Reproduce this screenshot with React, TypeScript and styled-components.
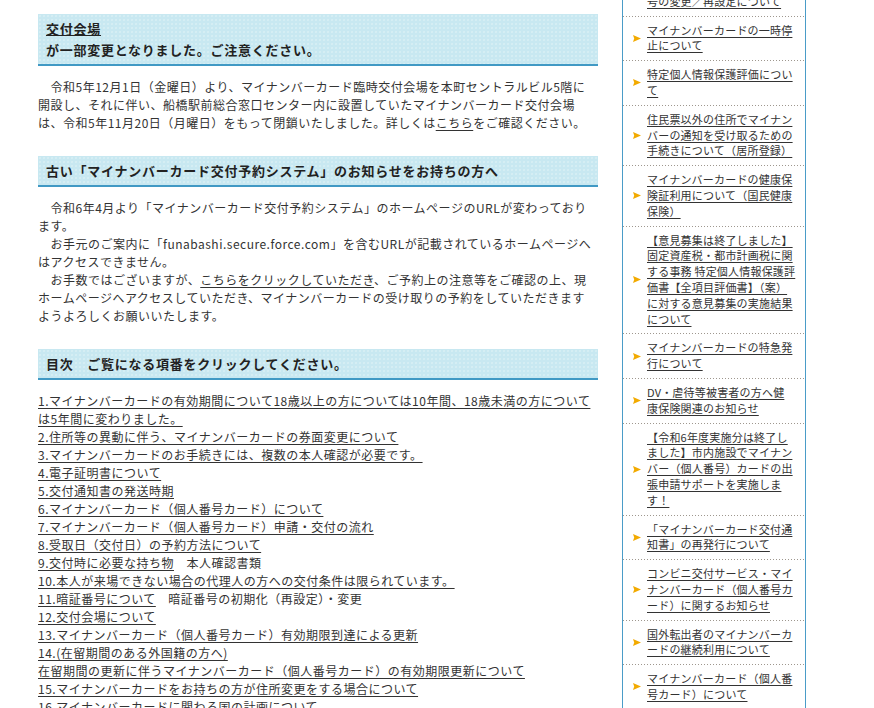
import React from "react";
import styled, { createGlobalStyle } from "styled-components";

const Global = createGlobalStyle`
  html, body { margin: 0; padding: 0; background: #fff; }
  body {
    font-family: "Noto Sans CJK JP", "Noto Sans", sans-serif;
    color: #333;
    overflow: hidden;
  }
`;

const Page = styled.div`
  display: flex;
  align-items: flex-start;
  gap: 24px;
  padding-left: 38px;
`;

const Main = styled.main`
  width: 560px;
  flex: none;
  padding-top: 14px;
`;

const Heading = styled.h2`
  margin: 0;
  padding: 4px 8px;
  font-size: 13px;
  line-height: 21px;
  font-weight: bold;
  letter-spacing: 0.75px;
  color: #222;
  background-color: #c8e8f1;
  background-image: radial-gradient(circle, rgba(255, 255, 255, 0.25) 0.7px, transparent 0.9px);
  background-size: 4px 4px;
  border-bottom: 2px solid #4199c4;
`;

const HeadLink = styled.a`
  color: #222;
  text-decoration: underline;
`;

const Para = styled.p`
  margin: 12px 0 24px;
  padding-right: 4px;
  font-size: 12px;
  line-height: 18px;
  letter-spacing: 0.5px;
`;

const Line = styled.span`
  display: block;
`;

const TextLink = styled.a`
  color: #333;
  text-decoration: underline;
  text-underline-offset: 2px;
`;

const Toc = styled.ul`
  margin: 12px 0 0;
  padding: 0 4px 0 0;
  list-style: none;
  font-size: 12px;
  line-height: 18px;
  letter-spacing: 0.5px;
`;

const TocItem = styled.li`
  margin: 0;
`;

const Side = styled.aside`
  width: 182px;
  flex: none;
  margin-top: -28px;
  border-left: 1px solid #4a9cc8;
  border-right: 1px solid #4a9cc8;
`;

const SideItem = styled.div`
  display: flex;
  align-items: center;
  padding: 6px 9.5px 7px 10px;
  background: linear-gradient(to right, #9e978e 1px, transparent 1px) left bottom / 3px 1px repeat-x;
`;

const Arrow = styled.svg`
  flex: none;
  width: 8px;
  height: 7px;
  margin-right: 6px;
`;

const SideLink = styled.a`
  display: block;
  width: 148.5px;
  font-size: 11px;
  line-height: 15.8px;
  letter-spacing: 0.2px;
  color: #333;
  text-decoration: underline;
  text-underline-offset: 2px;
`;

const IND = "\u3000";

const sideLinks = [
  "マイナンバーカードの暗証番号の変更／再設定について",
  "マイナンバーカードの一時停止について",
  "特定個人情報保護評価について",
  "住民票以外の住所でマイナンバーの通知を受け取るための手続きについて（居所登録）",
  "マイナンバーカードの健康保険証利用について（国民健康保険）",
  "【意見募集は終了しました】固定資産税・都市計画税に関する事務 特定個人情報保護評価書【全項目評価書】（案）に対する意見募集の実施結果について",
  "マイナンバーカードの特急発行について",
  "DV・虐待等被害者の方へ健康保険関連のお知らせ",
  "【令和6年度実施分は終了しました】市内施設でマイナンバー（個人番号）カードの出張申請サポートを実施します！",
  "「マイナンバーカード交付通知書」の再発行について",
  "コンビニ交付サービス・マイナンバーカード（個人番号カード）に関するお知らせ",
  "国外転出者のマイナンバーカードの継続利用について",
  "マイナンバーカード（個人番号カード）について",
  "マイナンバーカードの暗証番号について",
];

type TocEntry = { link: string; extra?: string; second?: string };

const toc: TocEntry[] = [
  { link: "1.マイナンバーカードの有効期間について18歳以上の方については10年間、18歳未満の方については5年間に変わりました。 " },
  { link: "2.住所等の異動に伴う、マイナンバーカードの券面変更について" },
  { link: "3.マイナンバーカードのお手続きには、複数の本人確認が必要です。 " },
  { link: "4.電子証明書について" },
  { link: "5.交付通知書の発送時期" },
  { link: "6.マイナンバーカード（個人番号カード）について" },
  { link: "7.マイナンバーカード（個人番号カード）申請・交付の流れ" },
  { link: "8.受取日（交付日）の予約方法について" },
  { link: "9.交付時に必要な持ち物", extra: "\u3000本人確認書類" },
  { link: "10.本人が来場できない場合の代理人の方への交付条件は限られています。 " },
  { link: "11.暗証番号について", extra: "\u3000暗証番号の初期化（再設定）・変更" },
  { link: "12.交付会場について" },
  { link: "13.マイナンバーカード（個人番号カード）有効期限到達による更新" },
  { link: "14.(在留期間のある外国籍の方へ)", second: "在留期間の更新に伴うマイナンバーカード（個人番号カード）の有効期限更新について" },
  { link: "15.マイナンバーカードをお持ちの方が住所変更をする場合について" },
  { link: "16.マイナンバーカードに関わる国の計画について" },
  { link: "17.マイナンバーカードの紛失・盗難について" },
];

function ArrowIcon() {
  return (
    <Arrow viewBox="0 0 8 7" aria-hidden="true">
      <polygon points="0,0 8,3.5 0,7 1.2,3.5" fill="#f2aa00" />
    </Arrow>
  );
}

export default function App() {
  return (
    <>
      <Global />
      <Page>
        <Main>
          <Heading>
            <HeadLink href="#">交付会場</HeadLink>
            <br />
            が一部変更となりました。ご注意ください。
          </Heading>
          <Para>
            {IND + "令和5年12月1日（金曜日）より、マイナンバーカード臨時交付会場を本町セントラルビル5階に開設し、それに伴い、船橋駅前総合窓口センター内に設置していたマイナンバーカード交付会場は、令和5年11月20日（月曜日）をもって閉鎖いたしました。詳しくは"}
            <TextLink href="#">こちら</TextLink>をご確認ください。
          </Para>

          <Heading>古い「マイナンバーカード交付予約システム」のお知らせをお持ちの方へ</Heading>
          <Para>
            <Line>{IND + "令和6年4月より「マイナンバーカード交付予約システム」のホームページのURLが変わっております。"}</Line>
            <Line>{IND + "お手元のご案内に「funabashi.secure.force.com」を含むURLが記載されているホームページへはアクセスできません。"}</Line>
            <Line>
              {IND + "お手数ではございますが、"}
              <TextLink href="#">こちらをクリックしていただき</TextLink>
              {"、ご予約上の注意等をご確認の上、現ホームページへアクセスしていただき、マイナンバーカードの受け取りの予約をしていただきますようよろしくお願いいたします。"}
            </Line>
          </Para>

          <Heading>目次　ご覧になる項番をクリックしてください。</Heading>
          <Toc>
            {toc.map((t) => (
              <TocItem key={t.link}>
                <TextLink href="#">{t.link}</TextLink>
                {t.extra}
                {t.second && (
                  <>
                    <br />
                    <TextLink href="#">{t.second}</TextLink>
                  </>
                )}
              </TocItem>
            ))}
          </Toc>
        </Main>

        <Side>
          {sideLinks.map((s) => (
            <SideItem key={s}>
              <ArrowIcon />
              <SideLink href="#">{s}</SideLink>
            </SideItem>
          ))}
        </Side>
      </Page>
    </>
  );
}
